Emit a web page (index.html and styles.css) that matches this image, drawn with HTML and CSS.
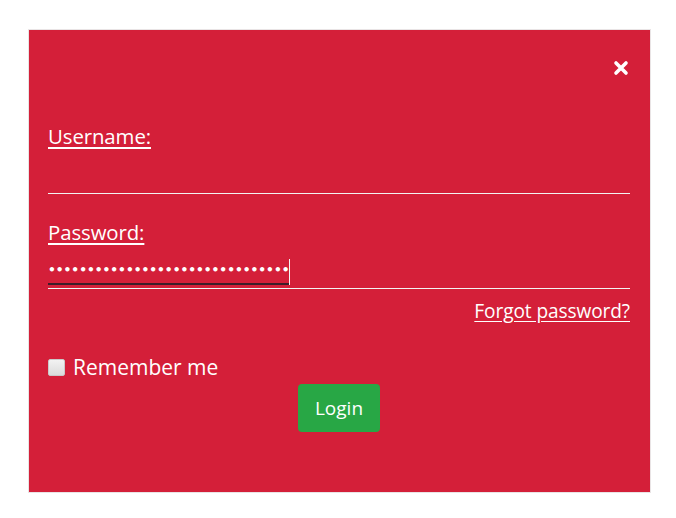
FILE: index.html
```html
<!DOCTYPE html>
<html lang="en">
<head>
<meta charset="utf-8">
<title>Login</title>
<link rel="stylesheet" href="styles.css">
</head>
<body>
<div class="modal">
  <div class="close-row">
    <svg class="close" width="16" height="16" viewBox="0 0 16 16" aria-label="Close">
      <path d="M3 3 L13 13 M13 3 L3 13" stroke="#fff" stroke-width="3.6" stroke-linecap="round"/>
    </svg>
  </div>
  <form class="form">
    <label class="label" for="user">Username:</label>
    <input class="field" id="user" type="text">
    <label class="label label-pw">Password:</label>
    <div class="field pw"><span class="dots">•••••••••••••••••••••••••••••••</span><span class="caret"></span></div>
    <div class="forgot-row"><a class="forgot" href="#">Forgot password?</a></div>
    <label class="remember"><span class="check"></span>Remember me</label>
    <div class="btn-row"><button class="btn" type="button">Login</button></div>
  </form>
</div>
</body>
</html>
```
FILE: styles.css
```css
html, body {
  margin: 0;
  padding: 0;
  background: #ffffff;
}
body {
  font-family: "Open Sans", "Noto Sans", sans-serif;
  color: #ffffff;
}
.modal {
  box-sizing: border-box;
  width: 623px;
  height: 464px;
  margin: 29px 0 0 28px;
  background: #d41f39;
  border: 1px solid #e9e4e5;
  padding: 30px 20px 0 19px;
}
.close-row {
  display: flex;
  justify-content: flex-end;
  height: 17px;
  padding-right: 1px;
}
.close {
  display: block;
}
.form {
  display: flex;
  flex-direction: column;
}
.label {
  display: block;
  font-size: 20.4px;
  line-height: 24px;
  letter-spacing: -0.1px;
  text-decoration: underline;
  text-underline-offset: 3px;
  margin-top: 47px;
  align-self: flex-start;
}
.label-pw {
  margin-top: 26px;
}
.field {
  box-sizing: border-box;
  display: block;
  width: 100%;
  height: 46px;
  margin: 0;
  padding: 0;
  background: transparent;
  border: 0;
  border-bottom: 1px solid #f3f3f3;
  outline: none;
  color: #fff;
  font: inherit;
}
.pw {
  height: 45px;
  display: flex;
  align-items: flex-end;
  padding-bottom: 3px;
}
.dots {
  font-family: "DejaVu Sans", sans-serif;
  font-size: 12.2px;
  font-weight: bold;
  letter-spacing: 0px;
  line-height: 26px;
  border-bottom: 2px solid #3b1d2a;
}
.caret {
  display: block;
  width: 1px;
  height: 26px;
  background: #f4f4f4;
}
.forgot-row {
  display: flex;
  justify-content: flex-end;
  margin-top: 11px;
}
.forgot {
  color: #fff;
  font-size: 19.1px;
  line-height: 23px;
  letter-spacing: -0.1px;
  text-decoration: underline;
  text-underline-offset: 3px;
}
.remember {
  display: flex;
  align-items: center;
  font-size: 21px;
  line-height: 26px;
  margin-top: 31px;
}
.check {
  box-sizing: border-box;
  width: 17px;
  height: 17px;
  border-radius: 2px;
  border: 1px solid #c9c9c9;
  background: linear-gradient(#f2f2f2, #dcdcdc);
  margin-right: 8px;
}
.btn-row {
  display: flex;
  justify-content: center;
  margin-top: 4px;
}
.btn {
  font-family: inherit;
  font-size: 19px;
  color: #fff;
  background: #28a745;
  border: 0;
  border-radius: 4px;
  width: 82px;
  height: 48px;
  padding: 0;
}
```
